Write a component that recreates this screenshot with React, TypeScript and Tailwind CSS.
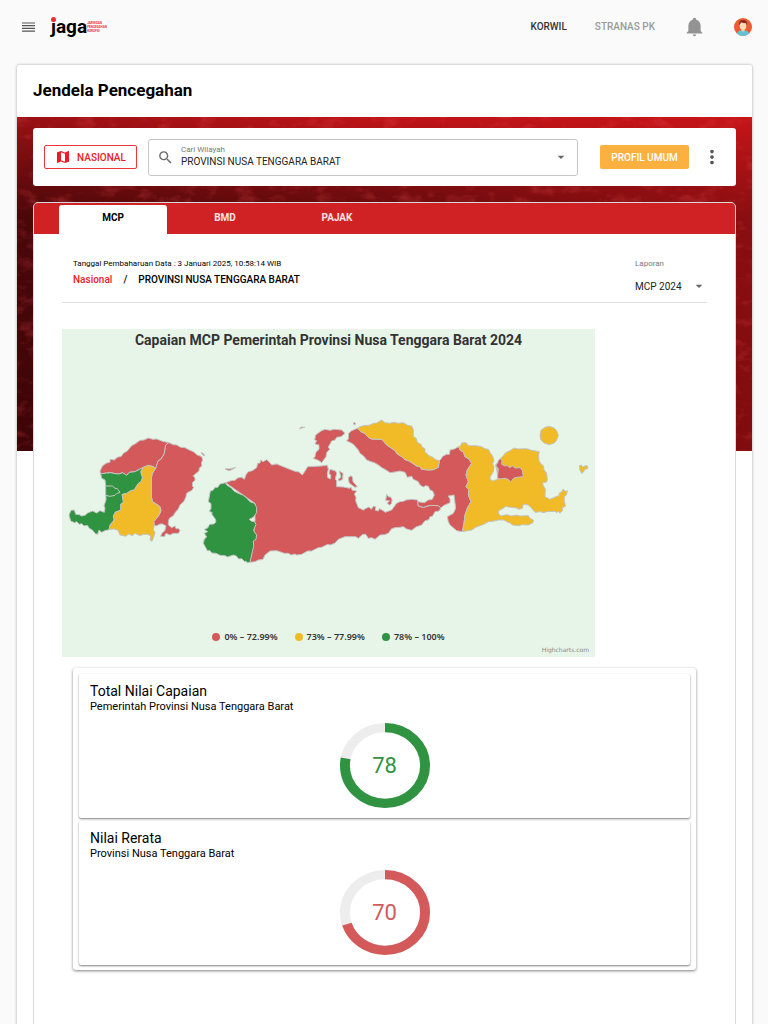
import React, { JSX, useState } from "react";
import { MdArrowDropDown, MdMap, MdMoreVert, MdSearch } from "react-icons/md";

const RED = "#d3595b";
const YELLOW = "#f0bb26";
const GREEN = "#2f9342";

const tabs = ["MCP", "BMD", "PAJAK"];

const legends = [
  { label: "0% – 72.99%", color: RED },
  { label: "73% – 77.99%", color: YELLOW },
  { label: "78% – 100%", color: GREEN },
];

const scores = [
  {
    title: "Total Nilai Capaian",
    subtitle: "Pemerintah Provinsi Nusa Tenggara Barat",
    value: 78,
    color: GREEN,
  },
  {
    title: "Nilai Rerata",
    subtitle: "Provinsi Nusa Tenggara Barat",
    value: 70,
    color: RED,
  },
];

// every island group has its own origin, later shapes are drawn on top
const islands = [
  {
    name: "Lombok",
    transform: "translate(-6 288)",
    regions: [
      {
        name: "Lombok Utara",
        color: RED,
        points:
          "120,138 128,122 140,114 150,112 150,103 163,105 172,97 184,94 190,85 202,78 215,62 228,55 240,46 252,45 265,39 278,43 290,42 308,49 327,53 317,60 315,75 312,88 303,102 294,108 294,115 291,118 287,130 280,125 265,121 250,127 238,133 225,140 208,142 200,151 192,147 188,143 177,147 165,146 153,143 140,144 122,147",
      },
      {
        name: "Lombok Timur",
        color: RED,
        points:
          "327,53 340,59 350,60 362,67 375,68 388,75 400,80 412,90 425,95 428,105 424,114 426,122 418,129 417,138 406,147 400,152 405,160 405,166 398,172 397,183 401,187 396,196 384,202 380,205 378,215 372,229 360,240 355,252 346,262 340,272 328,280 325,290 325,300 335,308 345,303 348,311 356,311 360,317 355,325 340,325 330,330 318,325 313,335 302,334 306,324 314,318 318,303 308,297 300,297 288,303 283,300 281,290 290,280 297,270 303,257 300,245 290,238 277,230 274,215 274,160 277,145 287,130 291,118 294,108 303,102 312,88 315,75 317,60",
      },
      {
        name: "Lombok Tengah",
        color: YELLOW,
        points:
          "250,127 265,121 280,125 287,130 277,145 274,160 274,215 277,230 290,238 300,245 303,257 297,270 290,280 281,290 283,300 280,315 285,322 281,337 276,349 270,345 272,333 262,328 250,328 240,332 225,325 218,332 205,327 198,334 180,330 173,315 160,312 147,314 150,300 162,285 160,273 165,262 182,255 182,237 190,232 186,208 200,205 212,197 222,195 235,175 243,170 247,158 242,140",
      },
      {
        name: "Lombok Barat",
        color: GREEN,
        points:
          "122,147 140,144 153,143 165,146 177,147 188,143 200,151 208,142 225,140 250,127 242,140 247,158 243,170 235,175 222,195 212,197 200,205 186,208 190,232 182,237 182,255 165,262 160,273 162,285 150,300 147,314 135,317 125,322 117,315 113,328 106,326 98,316 88,310 82,301 72,303 65,296 58,298 50,290 44,293 32,288 27,270 33,256 43,255 47,268 58,269 65,273 75,271 84,263 98,258 110,264 120,257 133,262 135,250 132,242 138,225 137,183 135,165 125,160",
      },
      {
        name: "Mataram",
        color: GREEN,
        points: "137,183 157,183 165,190 172,191 180,202 170,206 165,211 150,214 137,211",
      },
      { name: "Gili", color: RED, points: "423,83 428,84 434,91 431,92" },
    ],
  },
  {
    name: "Sumbawa",
    transform: "translate(699 243)",
    regions: [
      {
        name: "Sumbawa",
        color: RED,
        points:
          "-208,218 -192,212 -180,211 -172,204 -160,202 -152,208 -147,194 -140,185 -128,182 -115,173 -112,160 -105,159 -103,150 -96,155 -85,149 -75,158 -70,165 -55,162 -35,170 -18,177 0,184 12,186 22,195 30,183 38,170 60,169 78,168 97,166 100,178 97,190 98,203 107,207 107,195 102,190 105,178 122,183 125,190 121,208 125,212 125,230 145,231 165,235 168,232 172,241 185,243 178,252 183,262 182,272 190,293 205,300 213,295 222,291 229,298 235,289 242,290 241,301 250,303 253,296 265,302 270,307 290,300 305,280 315,275 325,274 333,270 350,268 368,270 370,288 385,292 405,286 430,287 438,294 432,303 420,305 413,318 404,321 402,329 390,332 380,345 363,351 350,361 335,357 325,350 315,352 300,353 290,356 280,370 268,374 255,375 240,388 230,383 220,385 212,373 203,373 190,385 182,380 150,380 130,388 119,400 105,405 98,403 80,412 70,413 50,423 38,423 20,433 5,435 0,432 -12,435 -20,430 -32,430 -55,422 -75,423 -90,435 -96,448 -110,450 -120,455 -135,457 -130,420 -120,330 -120,280 -170,245",
      },
      {
        name: "Dompu",
        color: RED,
        points:
          "155,93 160,87 161,70 170,62 187,55 198,65 208,70 220,82 230,87 260,88 268,97 275,105 290,115 300,122 307,132 320,140 328,148 340,152 350,158 365,168 375,170 380,178 400,180 415,179 430,172 433,152 438,147 443,139 455,133 463,133 465,120 478,117 490,110 497,122 505,125 510,140 522,147 530,160 517,180 513,195 520,215 513,230 522,240 520,255 528,275 517,295 510,315 507,340 502,365 485,362 465,345 460,335 457,320 475,310 482,295 477,255 460,258 465,268 465,278 445,287 438,294 430,287 405,286 385,292 370,288 368,275 388,278 400,270 412,268 418,255 413,243 405,240 400,229 392,227 385,231 375,225 370,215 355,208 350,199 337,202 330,187 315,183 300,186 285,188 270,178 262,174 250,165 240,159 228,155 215,150 208,140 195,130 190,120 175,103 167,98",
      },
      {
        name: "Tambora",
        color: YELLOW,
        points:
          "187,55 195,50 210,46 222,46 235,40 245,39 260,30 270,38 285,40 295,37 310,40 325,38 338,46 350,48 355,58 355,80 364,85 367,97 378,103 382,112 390,116 390,125 402,137 412,141 422,149 433,152 430,172 415,179 400,180 380,178 375,170 365,168 350,158 340,152 328,148 320,140 307,132 300,122 290,115 275,105 268,97 260,88 230,87 220,82 208,70 198,65",
      },
      {
        name: "Moyo",
        color: RED,
        points:
          "55,145 60,140 62,128 72,118 72,105 60,102 65,92 59,90 62,75 78,63 90,58 105,61 118,58 140,60 150,70 138,80 125,82 120,90 110,93 100,111 104,118 95,128 93,140 80,158 72,152",
      },
      { name: "Liang", color: RED, points: "133,183 144,190 143,208 132,213 130,207 138,202" },
      { name: "Ngali", color: RED, points: "160,203 168,197 172,201 174,215 187,230 180,232 166,222 162,217" },
      {
        name: "Rakit",
        color: RED,
        points: "275,253 280,260 288,262 291,270 289,281 283,285 277,280 284,272 272,272",
      },
      { name: "Medang", color: RED, points: "13,57 18,51 30,52 20,54" },
      { name: "Satonda", color: RED, points: "176,38 180,38 182,42 178,44 175,42" },
      { name: "Panjang", color: RED, points: "-210,176 -195,177 -178,172 -195,182 -204,180" },
    ],
  },
  {
    name: "Sumbawa Barat",
    transform: "translate(399 348)",
    regions: [
      {
        name: "Sumbawa Barat",
        color: GREEN,
        points:
          "92,113 94,119 110,130 118,139 130,145 145,151 155,159 165,170 178,175 185,187 185,203 175,217 163,223 168,228 178,230 183,238 176,255 180,265 185,268 183,283 175,288 176,305 172,320 165,352 157,353 152,348 150,351 140,341 131,342 124,333 115,330 98,336 90,332 75,331 63,325 50,324 45,317 37,317 25,295 28,282 35,276 28,265 38,260 28,253 38,249 44,238 56,237 62,232 62,224 50,207 52,203 43,199 48,190 48,176 40,170 46,138 54,136 60,127 68,127 75,117",
      },
    ],
  },
  {
    name: "Bima",
    transform: "translate(1134 258)",
    regions: [
      {
        name: "Bima",
        color: YELLOW,
        points:
          "55,95 62,92 65,84 78,83 85,92 105,92 125,95 134,101 145,103 151,114 158,123 162,138 158,146 162,155 160,170 151,185 150,192 158,198 173,193 172,175 167,150 180,132 190,122 197,113 212,106 222,99 235,102 260,101 275,106 298,110 296,120 297,137 303,147 310,152 312,165 320,174 322,195 320,201 308,203 310,212 316,222 315,245 330,253 352,243 358,242 357,235 365,231 369,222 376,229 382,227 380,239 373,245 373,260 377,273 367,279 368,285 360,295 354,289 350,293 345,289 320,290 310,293 302,290 285,292 275,280 265,270 250,267 247,280 238,283 226,278 205,276 197,274 190,280 176,287 175,294 182,303 200,299 215,303 230,300 240,303 265,302 270,310 280,315 279,323 265,330 245,329 238,332 217,330 212,325 200,320 192,315 175,315 163,318 145,320 133,327 120,332 107,337 95,345 67,350 72,325 75,300 82,280 93,260 85,240 87,225 78,215 85,200 78,180 82,165 95,145 87,132 75,125 70,110 62,107",
      },
      {
        name: "Kota Bima",
        color: RED,
        points:
          "167,150 173,145 175,136 181,131 186,137 185,148 195,153 202,151 208,158 218,153 225,159 240,158 247,166 250,185 238,186 225,188 219,192 212,201 205,193 193,190 180,192 172,188 175,162",
      },
      {
        name: "Sangeang",
        color: YELLOW,
        points: "315,37 328,34 341,38 350,47 355,61 350,75 343,84 328,89 312,84 302,74 300,60 303,46",
      },
      { name: "Gili Banta", color: YELLOW, points: "418,152 424,150 427,156 441,151 444,160 433,164 431,171 425,175 420,166" },
    ],
  },
];

function RegionMap(): JSX.Element {
  return (
    <svg
      viewBox="0 0 1599 984"
      className="absolute inset-0 h-full w-full"
      role="img"
      aria-label="Peta Nusa Tenggara Barat"
    >
      {islands.map((island) => (
        <g key={island.name} transform={island.transform}>
          {island.regions.map((region) => (
            <polygon
              key={region.name}
              points={region.points}
              fill={region.color}
              stroke="#c4c4c4"
              strokeWidth="3"
              strokeLinejoin="round"
            />
          ))}
        </g>
      ))}
    </svg>
  );
}

function Logo(): JSX.Element {
  return (
    <a href="#" className="flex items-center">
      <span className="relative text-[19px] leading-6 font-bold text-black">
        jaga
        <i className="absolute top-[2px] left-0 size-[5px] rounded-full bg-[#ee2e31]" />
      </span>
      <span className="text-[3px] leading-[4px] font-bold text-[#ee2e31]">
        JARINGAN
        <br />
        PENCEGAHAN
        <br />
        KORUPSI
      </span>
    </a>
  );
}

function Avatar(): JSX.Element {
  return (
    <svg viewBox="0 0 54 54" className="size-[18px]">
      <defs>
        <clipPath id="avatar-clip">
          <circle cx="27" cy="27" r="27" />
        </clipPath>
      </defs>
      <g clipPath="url(#avatar-clip)">
        <rect width="54" height="54" fill="#ee5a31" />
        <path d="M8 54c0-12 7-16 14-17h10c7 1 14 5 14 17z" fill="#5fc3d6" />
        <path d="M22 30h10v8q-5 5-10 0z" fill="#f3c69c" />
        <ellipse cx="27" cy="23" rx="10" ry="12" fill="#fbdcb8" />
        <path d="M16 22C13 10 20 5 28 6c8-1 13 6 10 16l-3-7c-6 1-11 0-14-2-1 4-3 5-5 9z" fill="#8d2a20" />
      </g>
    </svg>
  );
}

function TopBar(): JSX.Element {
  return (
    <header className="flex h-[53px] items-center pr-4 pl-[22px]">
      <button aria-label="Menu" className="mr-4">
        <svg viewBox="0 0 13 10" className="h-[10px] w-[13px]" stroke="#555" strokeWidth="1.2">
          <path d="M0 1h13M0 3.7h13M0 6.4h13M0 9.1h13" />
        </svg>
      </button>
      <Logo />
      <nav className="ml-auto flex items-center text-[10px] font-medium">
        <a href="#" className="mr-7 text-[#333]">KORWIL</a>
        <a href="#" className="mr-[29px] text-[#9b9b9b]">STRANAS PK</a>
        <button aria-label="Notifikasi" className="mr-[29px]">
          <svg viewBox="0 0 24 24" className="size-[21px]" fill="#939393">
            <path d="M21 19v1H3v-1l2-2v-6c0-3.1 2.03-5.83 5-6.71V4a2 2 0 0 1 4 0v.29c2.97.88 5 3.61 5 6.71v6l2 2m-7 2a2 2 0 0 1-4 0" />
          </svg>
        </button>
        <button aria-label="Akun">
          <Avatar />
        </button>
      </nav>
    </header>
  );
}

function Backdrop(): JSX.Element {
  return (
    <div className="absolute inset-x-0 top-0 h-[334px] overflow-hidden bg-linear-to-b from-[#c01418] via-[#5c090b] via-30% to-[#4c0608]">
      <div className="absolute inset-0 bg-linear-to-r from-black/20 via-transparent to-[#d01519]/40" />
      <svg className="absolute inset-0 h-full w-full">
        <filter id="grain" x="0" y="0" width="100%" height="100%">
          <feTurbulence type="fractalNoise" baseFrequency="0.05 0.09" numOctaves="5" seed="4" />
          <feColorMatrix values="0 0 0 0 0.75  0 0 0 0 0.06  0 0 0 0 0.07  2.6 0 0 0 -1.3" />
        </filter>
        <rect width="100%" height="100%" filter="url(#grain)" opacity="0.35" />
      </svg>
    </div>
  );
}

function SearchPanel(): JSX.Element {
  return (
    <div className="relative flex h-[58px] items-center rounded-[3px] bg-white pr-[13px] pl-[11px]">
      <button className="flex h-6 w-[93px] shrink-0 items-center justify-center gap-[6px] rounded-[2px] border border-[#f0353a] text-[10px] font-medium text-[#ec1c24]">
        <MdMap className="size-4" />
        NASIONAL
      </button>
      <div className="relative ml-[11px] h-[37px] flex-1 rounded-[3px] border border-[#c6c6c6]">
        <MdSearch className="absolute top-[9px] left-2 size-[17px] text-[#6b6b6b]" />
        <label htmlFor="wilayah" className="absolute top-1 left-8 text-[8px] leading-3 text-[#777]">
          Cari Wilayah
        </label>
        <select
          id="wilayah"
          className="h-full w-full appearance-none pt-[9px] pl-8 text-[10px] text-[#222] outline-none"
        >
          <option>PROVINSI NUSA TENGGARA BARAT</option>
        </select>
        <MdArrowDropDown className="pointer-events-none absolute top-[9px] right-2 size-4 text-[#666]" />
      </div>
      <button className="ml-[22px] h-6 w-[89px] shrink-0 rounded-[2px] bg-[#fbb040] text-[10px] font-medium text-white">
        PROFIL UMUM
      </button>
      <button aria-label="Lainnya" className="ml-3">
        <MdMoreVert className="size-[22px] text-[#555]" />
      </button>
    </div>
  );
}

function ScoreCard({ title, subtitle, value, color }: (typeof scores)[number]): JSX.Element {
  return (
    <section className="h-[144px] rounded-[2px] bg-white px-[11px] pt-2 shadow-[0_1px_2px_rgba(0,0,0,0.5)]">
      <h3 className="text-[14px] leading-[18px] text-black">{title}</h3>
      <p className="text-[11px] leading-[14px] text-black">{subtitle}</p>
      <div className="relative mx-auto mt-[9px] h-[85px] w-[90px]">
        <svg viewBox="0 0 100 100" preserveAspectRatio="none" className="h-full w-full">
          <circle cx="50" cy="50" r="44.5" fill="none" stroke="#ededed" strokeWidth="11" />
          <circle
            cx="50"
            cy="50"
            r="44.5"
            fill="none"
            stroke={color}
            strokeWidth="11"
            pathLength="100"
            strokeDasharray={`${value} 100`}
            transform="rotate(-90 50 50)"
          />
        </svg>
        <span
          className="absolute inset-0 flex items-center justify-center text-[22px] leading-[84px]"
          style={{ color }}
        >
          {value}
        </span>
      </div>
    </section>
  );
}

function App(): JSX.Element {
  const [activeTab, setActiveTab] = useState<string>("MCP");

  return (
    <div className="h-screen overflow-hidden bg-[#fafafa] font-[Roboto,sans-serif]">
      <TopBar />
      <main className="mt-3 mr-4 ml-[17px] min-h-screen rounded-[2px] bg-white shadow-[0_0_3px_rgba(0,0,0,0.35)]">
        <h1 className="flex h-[52px] items-center px-4 text-[17px] font-bold text-black">
          Jendela Pencegahan
        </h1>

        <div className="relative px-4 pt-[11px]">
          <Backdrop />
          <SearchPanel />

          <div className="relative mt-4 min-h-screen overflow-hidden rounded-t-[5px] border border-[#d9d9d9] bg-white">
            <div role="tablist" className="flex h-[31px] items-end bg-[#d02224] pl-[23px]">
              {tabs.map((tab) => (
                <button
                  key={tab}
                  role="tab"
                  aria-selected={activeTab === tab}
                  onClick={() => setActiveTab(tab)}
                  className={`mx-[2px] w-[108px] rounded-t-[3px] text-[10px] font-bold ${
                    activeTab === tab
                      ? "h-[29px] bg-white pb-1 text-black"
                      : "h-[29px] pb-1 text-[#fbe3e3]"
                  }`}
                >
                  {tab}
                </button>
              ))}
            </div>

            <div className="px-7 pt-6">
              <div className="flex h-[45px] justify-between border-b border-[#dedede] pl-[11px]">
                <div>
                  <p className="text-[8px] leading-3 text-black">
                    Tanggal Pembaharuan Data : 3 Januari 2025, 10:58:14 WIB
                  </p>
                  <nav className="mt-[3px] flex gap-[11px] text-[10px] leading-[14px] font-medium text-black">
                    <a href="#" className="text-[#ec1c24]">Nasional</a>
                    <span>/</span>
                    <span>PROVINSI NUSA TENGGARA BARAT</span>
                  </nav>
                </div>
                <div className="w-[72px]">
                  <label htmlFor="laporan" className="block text-[8px] leading-3 text-[#777]">
                    Laporan
                  </label>
                  <div className="relative mt-2">
                    <select
                      id="laporan"
                      className="block h-4 w-full appearance-none text-[10px] text-[#222] outline-none"
                    >
                      <option>MCP 2024</option>
                    </select>
                    <MdArrowDropDown className="pointer-events-none absolute top-0 right-0 size-4 text-[#666]" />
                  </div>
                </div>
              </div>

              <div className="relative mt-[26px] flex h-[328px] w-[533px] max-w-full flex-col items-center bg-[#e7f5e9]">
                <RegionMap />
                <h2 className="mt-[2px] text-[14px] leading-[18px] font-bold text-[#333]">
                  Capaian MCP Pemerintah Provinsi Nusa Tenggara Barat 2024
                </h2>
                <ul className="mt-auto flex gap-[17px] font-['Noto_Sans',sans-serif] text-[9px] leading-3 font-semibold text-[#333]">
                  {legends.map((legend) => (
                    <li key={legend.label} className="flex items-center gap-1">
                      <i className="size-2 rounded-full" style={{ background: legend.color }} />
                      {legend.label}
                    </li>
                  ))}
                </ul>
                <a
                  href="#"
                  className="mr-[6px] self-end font-['DejaVu_Sans',sans-serif] text-[6px] leading-[14px] text-[#888]"
                >
                  Highcharts.com
                </a>
              </div>

              <div className="mx-[11px] mt-[11px] flex flex-col gap-[3px] rounded-[3px] px-[6px] pt-[6px] pb-[5px] shadow-[0_1px_3px_rgba(0,0,0,0.5)]">
                {scores.map((score) => (
                  <ScoreCard key={score.title} {...score} />
                ))}
              </div>
            </div>
          </div>
        </div>
      </main>
    </div>
  );
}

export default App;
